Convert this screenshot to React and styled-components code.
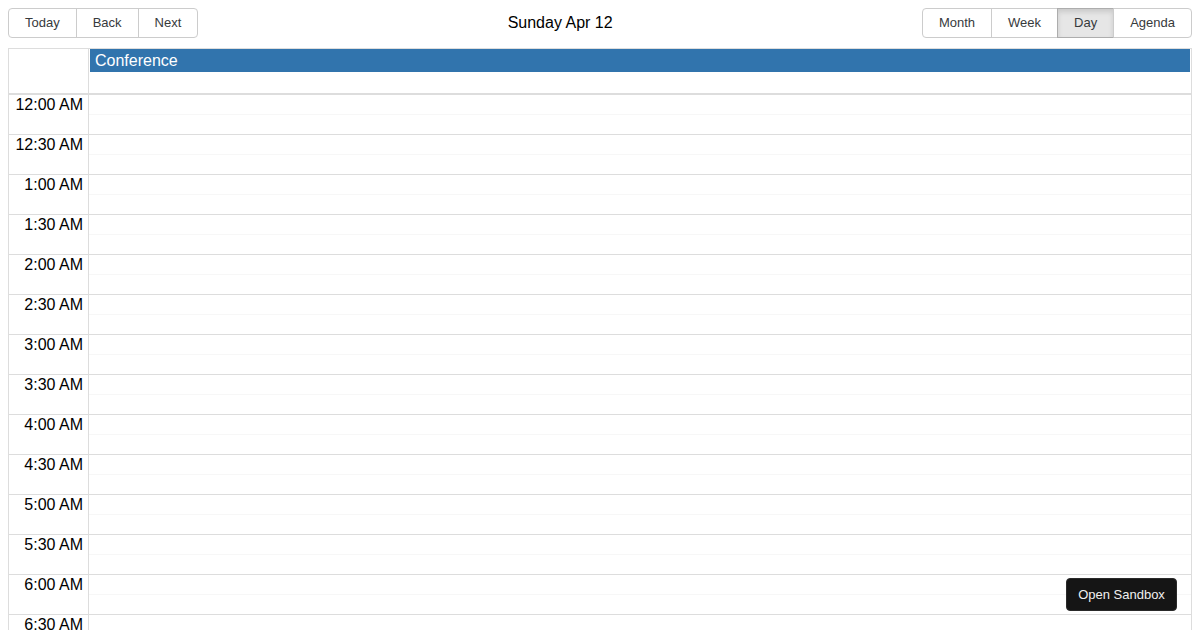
import React from "react";
import styled, { createGlobalStyle } from "styled-components";

const GlobalStyle = createGlobalStyle`
  html, body {
    margin: 0;
    padding: 0;
    height: 100%;
    overflow: hidden;
  }
  body {
    padding: 8px;
    box-sizing: border-box;
    font-family: "Liberation Sans", Arial, sans-serif;
    color: #000;
    background: #fff;
  }
`;

// Toolbar
const Toolbar = styled.div`
  display: flex;
  align-items: center;
  margin-bottom: 10px;
  font-size: 16px;
`;

const ButtonGroup = styled.span`
  display: inline-flex;
  white-space: nowrap;
`;

const ToolButton = styled.button`
  font-family: "Liberation Sans", Arial, sans-serif;
  font-size: 13px;
  line-height: 16px;
  color: #373a3c;
  background: ${(p) => (p.$active ? "#e6e6e6" : "none")};
  border: 1px solid ${(p) => (p.$active ? "#adadad" : "#ccc")};
  box-shadow: ${(p) => (p.$active ? "inset 0 3px 5px rgba(0, 0, 0, 0.125)" : "none")};
  padding: 6px 16px;
  margin: 0;
  border-radius: 0;
  cursor: pointer;
  & + & {
    margin-left: -1px;
  }
  &:first-child {
    border-top-left-radius: 4px;
    border-bottom-left-radius: 4px;
  }
  &:last-child {
    border-top-right-radius: 4px;
    border-bottom-right-radius: 4px;
  }
`;

const Label = styled.span`
  flex: 1;
  padding: 0 10px;
  text-align: center;
`;

// Calendar
const TimeView = styled.div`
  border: 1px solid #ddd;
  display: flex;
  flex-direction: column;
`;

const Header = styled.div`
  display: flex;
`;

const GutterHeader = styled.div`
  width: 79px;
  flex-shrink: 0;
  border-right: 1px solid #ddd;
`;

const HeaderContent = styled.div`
  flex: 1;
  display: flex;
  flex-direction: column;
`;

const AllDaySegment = styled.div`
  padding: 0 1px 1px 1px;
`;

const Event = styled.div`
  background: #3174ad;
  color: #fff;
  font-size: 16px;
  line-height: 19px;
  padding: 2px 5px;
  white-space: nowrap;
  overflow: hidden;
`;

const EmptyRow = styled.div`
  min-height: 20px;
`;

const Content = styled.div`
  display: flex;
  border-top: 2px solid #ddd;
`;

const Gutter = styled.div`
  width: 79px;
  flex-shrink: 0;
  border-right: 1px solid #ddd;
`;

const DayColumn = styled.div`
  flex: 1;
`;

const SlotGroup = styled.div`
  height: 39px;
  border-bottom: 1px solid #ddd;
  display: flex;
  flex-direction: column;
`;

const Slot = styled.div`
  flex: 1;
  border-top: ${(p) => (p.$line ? "1px solid #f7f7f7" : "none")};
`;

const TimeLabel = styled.div`
  font-size: 16px;
  line-height: 19px;
  padding: 0 5px;
  text-align: right;
  white-space: nowrap;
`;

const SandboxButton = styled.button`
  position: fixed;
  right: 23px;
  bottom: 19px;
  width: 111px;
  height: 33px;
  background: #151515;
  color: #f0f0f0;
  border: 1px solid #2a2a2a;
  border-radius: 4px;
  font-family: "Liberation Sans", Arial, sans-serif;
  font-size: 13px;
  cursor: pointer;
`;

const times = [];
for (let h = 0; h < 24; h++) {
  const hour = h % 12 === 0 ? 12 : h % 12;
  const ampm = h < 12 ? "AM" : "PM";
  times.push(`${hour}:00 ${ampm}`);
  times.push(`${hour}:30 ${ampm}`);
}

const App = () => {
  return (
    <>
      <GlobalStyle />
      <Toolbar>
        <ButtonGroup>
          <ToolButton>Today</ToolButton>
          <ToolButton>Back</ToolButton>
          <ToolButton>Next</ToolButton>
        </ButtonGroup>
        <Label>Sunday Apr 12</Label>
        <ButtonGroup>
          <ToolButton>Month</ToolButton>
          <ToolButton>Week</ToolButton>
          <ToolButton $active>Day</ToolButton>
          <ToolButton>Agenda</ToolButton>
        </ButtonGroup>
      </Toolbar>
      <TimeView>
        <Header>
          <GutterHeader />
          <HeaderContent>
            <AllDaySegment>
              <Event>Conference</Event>
            </AllDaySegment>
            <EmptyRow />
          </HeaderContent>
        </Header>
        <Content>
          <Gutter>
            {times.map((t) => (
              <SlotGroup key={t}>
                <TimeLabel>{t}</TimeLabel>
              </SlotGroup>
            ))}
          </Gutter>
          <DayColumn>
            {times.map((t) => (
              <SlotGroup key={t}>
                <Slot />
                <Slot $line />
              </SlotGroup>
            ))}
          </DayColumn>
        </Content>
      </TimeView>
      <SandboxButton>Open Sandbox</SandboxButton>
    </>
  );
};

export default App;
